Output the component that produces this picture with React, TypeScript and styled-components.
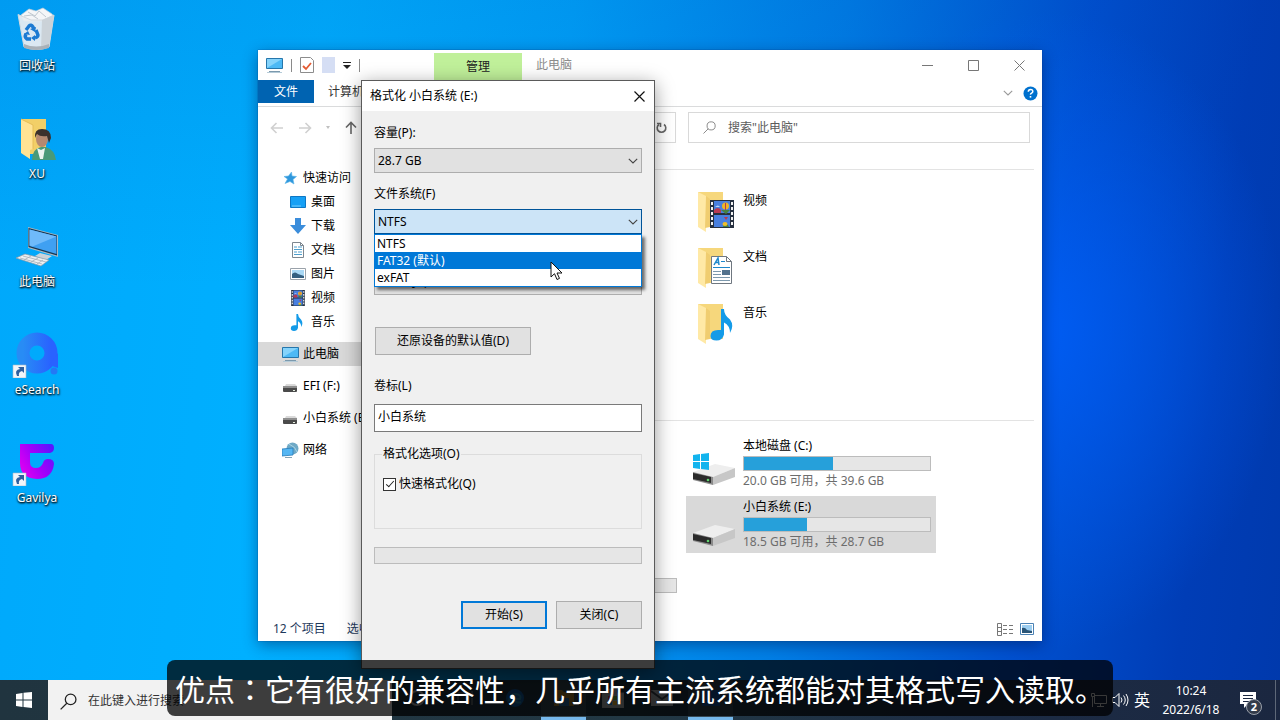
import React from 'react';
import styled, { createGlobalStyle, css } from 'styled-components';

const GlobalStyle = createGlobalStyle`
  *, *::before, *::after { box-sizing: border-box; }
  body { margin: 0; }
  body, button, input, select {
    font-family: "Noto Sans", "Noto Sans CJK SC", sans-serif;
    font-size: 12px;
    line-height: 18px;
  }
  button, input, select { border-radius: 0; color: #000; }
  ul { margin: 0; padding: 0; list-style: none; }
  svg { display: block; flex: none; }
`;

/* ---------- desktop ---------- */

const Desktop = styled.div`
  position: relative;
  display: flex;
  flex-direction: column;
  min-height: 100vh;
  overflow: hidden;
  background:
    radial-gradient(ellipse 240px 320px at 1045px 330px, rgba(0, 94, 248, 0.85), rgba(0, 90, 240, 0) 100%),
    linear-gradient(to bottom, rgba(0, 60, 170, 0.12), rgba(0, 60, 170, 0) 40%),
    linear-gradient(97deg, #00a8fb 0%, #00b0ff 24%, #00a2f8 42%, #007fe6 62%, #0050cf 80%, #003db6 92%, #0039ac 100%);
`;

const Shortcuts = styled.ul`
  display: flex;
  flex-direction: column;
  flex: 1;
  width: 74px;
  padding-top: 6px;
`;

const Shortcut = styled.li`
  display: flex;
  flex-direction: column;
  align-items: center;
  gap: 3px;
  height: 108px;
  color: #fff;
  text-shadow: 0 1px 2px #000, 1px 1px 2px rgba(0, 0, 0, 0.8);
`;

/* ---------- explorer window ---------- */

const Explorer = styled.section`
  position: absolute;
  top: 50px;
  left: 258px;
  right: 238px;
  display: flex;
  flex-direction: column;
  background: #fff;
  box-shadow: 0 0 1px #003a80, 0 4px 14px rgba(0, 20, 70, 0.45);
`;

const TitleRow = styled.header`
  display: flex;
  align-items: center;
  height: 30px;
`;

const QuickTools = styled.div`
  display: flex;
  align-items: center;
  gap: 8px;
  width: 176px;
  padding-left: 8px;
`;

const Divider = styled.span`
  width: 1px;
  height: 13px;
  background: #8a8a8a;
`;

const ManageTab = styled.div`
  align-self: flex-end;
  width: 88px;
  height: 27px;
  line-height: 27px;
  text-align: center;
  background: #c0f09a;
  color: #222;
`;

const WindowTitle = styled.span`
  flex: 1;
  padding-left: 14px;
  color: #8c8c8c;
`;

const CaptionButton = styled.button`
  display: grid;
  place-items: center;
  width: 46px;
  height: 28px;
  padding: 0;
  border: 0;
  background: transparent;
`;

const RibbonRow = styled.nav`
  display: flex;
  align-items: flex-start;
  height: 27px;
  border-bottom: 1px solid #dadbdc;
`;

const RibbonTab = styled.button<{ $primary?: boolean }>`
  height: 23px;
  padding: 0 14px;
  border: 0;
  background: ${p => (p.$primary ? '#0063b1' : 'transparent')};
  color: ${p => (p.$primary ? '#fff' : '#333')};
  width: ${p => (p.$primary ? '56px' : 'auto')};
`;

const RibbonEnd = styled.div`
  display: flex;
  align-items: center;
  gap: 10px;
  height: 26px;
  margin-left: auto;
  padding-right: 4px;
`;

const AddressRow = styled.div`
  display: flex;
  align-items: center;
  gap: 12px;
  height: 41px;
  padding-right: 12px;
`;

const Arrows = styled.div`
  display: flex;
  align-items: center;
  gap: 14px;
  width: 104px;
  padding-left: 12px;
`;

const AddressBox = styled.div`
  display: flex;
  align-items: center;
  justify-content: flex-end;
  flex: 0 0 302px;
  height: 31px;
  padding-right: 8px;
  border: 1px solid #d9d9d9;
`;

const SearchBox = styled.label`
  display: flex;
  align-items: center;
  flex: 1;
  gap: 12px;
  height: 31px;
  padding: 0 14px;
  border: 1px solid #d9d9d9;
`;

const BareInput = styled.input`
  flex: 1;
  min-width: 0;
  padding: 0;
  border: 0;
  outline: 0;
  background: transparent;
  &::placeholder { color: #5c5c5c; opacity: 1; }
`;

const ExplorerBody = styled.div`
  display: flex;
`;

const NavPane = styled.ul`
  width: 154px;
  padding-top: 18px;
  white-space: nowrap;
`;

const NavItem = styled.li<{ $level: number; $selected?: boolean; $spaced?: boolean }>`
  display: flex;
  align-items: center;
  gap: 5px;
  height: 24px;
  margin-top: ${p => (p.$spaced ? '8px' : '0')};
  padding-left: ${p => p.$level * 8 + 24}px;
  background: ${p => (p.$selected ? '#d9d9d9' : 'transparent')};
`;

const NavIcon = styled.span`
  display: flex;
  justify-content: center;
  width: 16px;
`;

const Content = styled.main`
  flex: 1;
  padding: 21px 8px 0 20px;
`;

const Group = styled.ul`
  display: grid;
  grid-template-columns: 250px 250px;
  align-content: start;
  column-gap: 4px;
  border-top: 1px solid #e3e3e3;
`;

const Folders = styled(Group)`
  grid-auto-rows: 56px;
  min-height: 251px;
  padding-top: 14px;
`;

const Drives = styled(Group)`
  grid-auto-rows: 57px;
  row-gap: 4px;
  min-height: 197px;
  padding-top: 14px;
`;

const Tile = styled.li<{ $column?: number; $selected?: boolean }>`
  grid-column: ${p => p.$column ?? 2};
  display: flex;
  gap: 5px;
  padding: 2px 5px 0 4px;
  background: ${p => (p.$selected ? '#d9d9d9' : 'transparent')};
`;

const FolderName = styled.span`
  padding-top: 6px;
`;

const DriveInfo = styled.div`
  flex: 1;
  display: flex;
  flex-direction: column;
`;

const Usage = styled.div`
  height: 15px;
  margin-top: 1px;
  border: 1px solid #bcbcbc;
  background: #e6e6e6;
`;

const UsageFill = styled.div`
  height: 100%;
  background: #26a0da;
`;

const FreeSpace = styled.span`
  line-height: 20px;
  color: #6d6d6d;
`;

const StatusBar = styled.footer`
  display: flex;
  align-items: center;
  gap: 21px;
  height: 24px;
  padding: 0 8px 0 15px;
  color: #1e395b;
`;

const ViewButtons = styled.div`
  display: flex;
  align-items: center;
  gap: 6px;
  margin-left: auto;
`;

/* ---------- format dialog ---------- */

const Dialog = styled.section`
  position: absolute;
  top: 80px;
  left: 361px;
  width: 294px;
  border: 1px solid #5a5a5a;
  background: #f0f0f0;
  box-shadow: 0 4px 18px rgba(0, 0, 0, 0.4);
`;

const DialogTitle = styled.header`
  display: flex;
  align-items: center;
  justify-content: space-between;
  height: 30px;
  padding-left: 8px;
  background: #fff;
`;

const CloseButton = styled.button`
  display: grid;
  place-items: center;
  width: 30px;
  height: 30px;
  padding: 0;
  border: 0;
  background: transparent;
`;

const Form = styled.form`
  display: flex;
  flex-direction: column;
  gap: 12px;
  padding: 13px 12px 39px;
`;

const Field = styled.div`
  position: relative;
  display: flex;
  flex-direction: column;
  gap: 6px;
`;

const UnitField = styled(Field)`
  padding-top: 24px;
`;

const SelectWrap = styled.div`
  display: grid;
  align-items: center;
  > * { grid-area: 1 / 1; }
  > svg { justify-self: end; margin-right: 4px; pointer-events: none; }
`;

const Select = styled.select<{ $open?: boolean }>`
  appearance: none;
  width: 100%;
  height: 25px;
  padding: 0 4px 0 3px;
  outline: 0;
  ${p => p.$open
    ? css`border: 1px solid #005499; background: #cce4f7;`
    : css`border: 1px solid #adadad; background: #e1e1e1;`}
`;

const OptionList = styled.ul`
  position: absolute;
  z-index: 2;
  top: 49px;
  left: 0;
  right: 0;
  border: 1px solid #0078d7;
  background: #fff;
  box-shadow: 3px 3px 3px rgba(0, 0, 0, 0.55);
`;

const Option = styled.li<{ $active?: boolean }>`
  height: 17px;
  padding-left: 2px;
  line-height: 17px;
  background: ${p => (p.$active ? '#0078d7' : 'transparent')};
  color: ${p => (p.$active ? '#fff' : '#000')};
`;

const PushButton = styled.button<{ $default?: boolean }>`
  width: 86px;
  height: 28px;
  padding: 0;
  background: #e1e1e1;
  border: ${p => (p.$default ? '2px solid #0078d7' : '1px solid #adadad')};
`;

const RestoreButton = styled(PushButton)`
  width: 156px;
  margin: 20px 0 10px 1px;
`;

const LabelInput = styled.input`
  height: 28px;
  margin-top: 3px;
  padding: 0 3px 4px;
  outline: 0;
  border: 1px solid #7a7a7a;
  background: #fff;
`;

const Options = styled.fieldset`
  min-width: 0;
  height: 84px;
  margin: 1px 0 0;
  padding: 12px 8px 0;
  border: 1px solid #dcdcdc;
`;

const Legend = styled.legend`
  margin-left: -1px;
  padding: 0 1px;
`;

const CheckLabel = styled.label`
  display: flex;
  align-items: center;
  gap: 3px;
`;

const CheckBox = styled.input`
  appearance: none;
  width: 13px;
  height: 13px;
  margin: 0;
  border: 1px solid #333;
  background: #fff;
  &:checked::after {
    content: "";
    display: block;
    width: 4px;
    height: 8px;
    margin: 0 0 0 4px;
    border: solid #222;
    border-width: 0 1px 1px 0;
    transform: rotate(42deg);
  }
`;

const ProgressTrack = styled.div`
  height: 17px;
  margin-top: 6px;
  border: 1px solid #bcbcbc;
  background: #e6e6e6;
`;

const Actions = styled.div`
  display: flex;
  justify-content: flex-end;
  gap: 9px;
  margin-top: 25px;
`;

const Pointer = styled.svg`
  position: absolute;
  z-index: 3;
  top: 261px;
  left: 550px;
`;

/* ---------- taskbar ---------- */

const Taskbar = styled.footer`
  display: flex;
  height: 40px;
  background: linear-gradient(90deg, #20343f 0%, #223844 50%, #1c2c45 78%, #1b2740 100%);
  color: #fff;
`;

const StartButton = styled.button`
  display: grid;
  place-items: center;
  width: 48px;
  padding: 0;
  border: 0;
  background: transparent;
`;

const TaskSearch = styled.label`
  display: flex;
  align-items: center;
  gap: 11px;
  width: 344px;
  padding: 2px 0 0 12px;
  background: #f2f2f2;
  input::placeholder { color: #333; }
`;

const TaskApp = styled.button<{ $running?: boolean }>`
  display: grid;
  place-items: center;
  width: 45px;
  margin: 0 2px;
  padding: 0 0 2px;
  border: 0;
  border-bottom: 3px solid ${p => (p.$running ? '#76b9ed' : 'transparent')};
  background: ${p => (p.$running ? 'rgba(255,255,255,0.1)' : 'transparent')};
  background-clip: padding-box;
`;

const Tray = styled.div`
  display: flex;
  align-items: center;
  gap: 5px;
  margin-left: auto;
  padding-right: 4px;
`;

const Ime = styled.span`
  font-size: 16px;
  line-height: 24px;
`;

const Clock = styled.time`
  display: flex;
  flex-direction: column;
  width: 68px;
  padding-left: 4px;
  text-align: center;
  line-height: 19px;
  white-space: nowrap;
`;

const Notices = styled.div`
  position: relative;
  width: 42px;
  padding-left: 12px;
`;

const NoticeCount = styled.span`
  position: absolute;
  top: 7px;
  left: 18px;
  width: 16px;
  height: 16px;
  border: 1px solid #9aa0aa;
  border-radius: 8px;
  background: #333b4a;
  font-size: 11px;
  font-weight: 700;
  line-height: 14px;
  text-align: center;
`;

const PeekEdge = styled.span`
  align-self: stretch;
  width: 1px;
  background: #5e6878;
`;

/* ---------- caption ---------- */

const Caption = styled.p`
  position: absolute;
  z-index: 4;
  bottom: 4px;
  left: 50%;
  transform: translateX(-50%);
  margin: 0;
  padding: 0 8px;
  border-radius: 8px;
  background: rgba(0, 0, 0, 0.75);
  color: #fff;
  font-family: "Noto Sans CJK SC", sans-serif;
  font-size: 30px;
  font-weight: 400;
  line-height: 56px;
  white-space: nowrap;
`;

const MidMark = styled.span`
  font-family: "Noto Sans CJK TC", sans-serif;
`;

/* ---------- drawings ---------- */

const BinIcon = () => (
  <svg width="44" height="48" viewBox="0 0 44 48">
    <path d="M6 9 14 3l7 2 7-3 9 6 2 3-5 4H9z" fill="#f4f6f8" stroke="#c4ccd4" strokeWidth=".7" />
    <path d="m13 6 7 4 4-5 7 6M9 10l8-1 6 4" fill="none" stroke="#bfc8d0" />
    <path d="M3 8.500 9 41q13 5 25 0l5-32-11 5H16z" fill="#e9edf1" fillOpacity=".94" stroke="#d2d9df" />
    <path d="m27 14 12-5-5 32-8 2z" fill="#cbd2d8" />
    <path d="M9 38q12 5 25 0v4q-13 4-25 0z" fill="#aab1b8" />
    <g fill="none" stroke="#1c7ad2" strokeWidth="3.400">
      <path d="m11 24 3-4q2-2 4 1l1 2M21 24l2 5q0 2-3 3M16 33h-4q-3-2-1-5" />
    </g>
    <path d="m15 23 6-2-1 5zM20 29v6l-4-3zM9 28l4-3 2 4z" fill="#1c7ad2" />
  </svg>
);

const UserFolder = () => (
  <svg width="40" height="48" viewBox="0 0 40 48">
    <path d="M4 5h25v35H8z" fill="#f2cf67" />
    <path d="m4 5 12 6v24l-3 1v9l-9-6z" fill="#ffe394" />
    <path d="m4 5 12 6v24" fill="none" stroke="#e6bd56" />
    <path d="M15 46q0-11 9-13h5q9 3 10 13z" fill="#4a9a78" />
    <path d="m20 34 4 2 4-2-2 11h-3z" fill="#edf5f1" />
    <ellipse cx="25" cy="25" rx="6" ry="8" fill="#b58870" />
    <path d="M18 24q-1-9 7-9 9 0 9 9l-2 5-2-7q-7 1-10-2z" fill="#3b302c" />
  </svg>
);

const DesktopPc = () => (
  <svg width="44" height="48" viewBox="0 0 44 48">
    <path d="m13 5 30 8v22l-30-9z" fill="#a9b8c4" />
    <path d="m13.500 6 28.500 7.500v20L13.500 25z" fill="#18364f" />
    <path d="m14.500 7.500 27 7v17.500l-27-8z" fill="#3fa0f2" />
    <path d="m14.500 7.500 27 7-24 10-3-1z" fill="#6fbafa" />
    <path d="m20 34 5-3 12 3-6 4z" fill="#cbd3d9" />
    <path d="m1 36 9-4 24 6-8 6z" fill="#edf0f2" stroke="#8b98a4" strokeWidth=".7" />
    <path d="m5 36 22 6M8 34l23 6M9 38l7-4M16 40l7-4M22 42l6-4" stroke="#a6afb8" strokeWidth=".8" />
  </svg>
);

const ShortcutArrow = () => (
  <g>
    <path d="M0 32h13v13H0z" fill="#f2f6fa" stroke="#a9bacb" strokeWidth=".6" />
    <path d="M4 43q-3-6 3-7l-2-2h6v6l-2-2q-4 1-3 5z" fill="#2f5f9f" />
  </g>
);

const ESearchIcon = () => (
  <svg width="50" height="48" viewBox="0 0 50 48">
    <defs>
      <linearGradient id="es" x1="0" x2="1"><stop stopColor="#288cf5" /><stop offset="1" stopColor="#2962ff" /></linearGradient>
    </defs>
    <circle cx="25" cy="23" r="14" fill="none" stroke="url(#es)" strokeWidth="13" />
    <circle cx="42" cy="41" r="3.500" fill="#2478f5" />
    <path d="M46 23v15l-9-3z" fill="#2962ff" />
    <g transform="translate(1 3)"><ShortcutArrow /></g>
  </svg>
);

const GavilyaIcon = () => (
  <svg width="50" height="48" viewBox="0 0 50 48">
    <defs>
      <linearGradient id="gv" y1=".8" x2="1" y2=".2"><stop stopColor="#e500f0" /><stop offset=".5" stopColor="#a500fa" /><stop offset="1" stopColor="#5a16ff" /></linearGradient>
    </defs>
    <path d="M8 6h31q3 0 3 4t-4 5H18v9q0 6 6 6 5 0 7-5 1-4 5-4 6 0 6 5-2 15-17 15Q8 40 8 25z" fill="url(#gv)" />
    <g transform="translate(1 3)"><ShortcutArrow /></g>
  </svg>
);

const PcIcon = () => (
  <svg width="17" height="16" viewBox="0 0 17 16">
    <path d="M.5 1.500h16v10H.5z" fill="#4db9f5" stroke="#2676ab" />
    <path d="M1 2h15L1 11z" fill="#85d3fb" />
    <path d="M3 14.500h11" stroke="#7b99ad" />
    <path d="M1 15.500h15" stroke="#b5cbd8" />
  </svg>
);

const StarIcon = () => (
  <svg width="14" height="14" viewBox="0 0 14 14">
    <path d="m8.500 1 .500 4 4.500.5-3.500 3 1 4.500-4-2.500-5 2 2.500-4.500L1 5.500l4.500-.5z" fill="#2f97dc" stroke="#5cb5ea" strokeWidth=".6" />
  </svg>
);

const DesktopIcon = () => (
  <svg width="16" height="16" viewBox="0 0 16 16"><path d="M.5 2.500h15v11H.5z" fill="#16a0f5" stroke="#0d77c4" /><path d="M2 12h9" stroke="#79cdfa" /></svg>
);

const DownloadIcon = () => (
  <svg width="16" height="16" viewBox="0 0 16 16"><path d="M5 0h6v7h5l-8 9-8-9h5z" fill="#3b8ddb" /></svg>
);

const DocumentIcon = () => (
  <svg width="16" height="16" viewBox="0 0 16 16">
    <path d="M2.500.5h8l3 3v12h-11z" fill="#fff" stroke="#7d8790" />
    <path d="M10.500.5v3h3" fill="none" stroke="#7d8790" />
    <path d="M4 5h3M8 5h4M4 7.500h8M4 10h3M8 10h4M4 12.500h8" stroke="#4d9fce" />
  </svg>
);

const PictureIcon = () => (
  <svg width="16" height="16" viewBox="0 0 16 16">
    <path d="M.5 2.500h15v11H.5z" fill="#fff" stroke="#9aa2aa" />
    <path d="M2 4h12v8H2z" fill="#a9d8f5" /><path d="M2 8q3-3 6 0l6 2v2H2z" fill="#345f80" />
  </svg>
);

const FilmArt = () => (
  <g>
    <path d="M0 0h24v28H0z" fill="#263040" />
    <path d="M4 1h16v12H4zM4 15h16v12H4z" fill="#487fe0" />
    <path d="M1 2h2v3H1zm0 5h2v3H1zm0 5h2v3H1zm0 5h2v3H1zm0 5h2v3H1zM21 2h2v3h-2zm0 5h2v3h-2zm0 5h2v3h-2zm0 5h2v3h-2zm0 5h2v3h-2z" fill="#f2f2f2" />
    <path d="M4 10q4-4 7 0v3H4zM14 17h4l-2 3z" fill="#b83a52" />
    <path d="M5 7q3-3 5 0z" fill="#b9d4f5" />
    <ellipse cx="15.500" cy="6" rx="3.500" ry="3.500" fill="#efb625" />
    <path d="M15 3h1v7h-1z" fill="#b83a52" />
    <path d="M11 10h9l-4 4zM13 27q2-8 6 0z" fill="#478241" />
    <ellipse cx="15" cy="24" rx="2.500" ry="2" fill="#f0be2b" />
  </g>
);

const VideoIcon = () => (
  <svg width="16" height="16" viewBox="-2 0 28 28"><FilmArt /></svg>
);

const NoteShape = () => <path d="M8 0h2q0 4 4 7 3 4 0 9 0-5-4-7v8q-1 4-5 4-4 0-4-3 0-4 5-4h2z" fill="#149be8" />;

const MusicIcon = () => (
  <svg width="16" height="17" viewBox="0 0 20 21"><NoteShape /></svg>
);

const SmallDrive = () => (
  <svg width="16" height="16" viewBox="0 0 16 16">
    <path d="m3 8 1-2h9l2 2z" fill="#d9d9d9" /><rect x="1" y="8" width="14" height="6" rx="1" fill="#4a4a4a" /><path d="M1 8h14v2H1z" fill="#8f8f8f" /><path d="M11 12.500h2" stroke="#e5eee0" />
  </svg>
);

const NetworkIcon = () => (
  <svg width="17" height="16" viewBox="0 0 17 16">
    <circle cx="10.500" cy="6.500" r="6" fill="#6fa9c6" /><path d="M7 2q7 3 8 8" stroke="#a9d4e6" fill="none" />
    <path d="m0 7 11-1v7L0 14z" fill="#55b6f3" stroke="#267bb9" strokeWidth=".8" /><path d="M3 15.500h7" stroke="#86a4b5" />
  </svg>
);

const Folder = ({ children }: { children?: React.ReactNode }) => (
  <svg width="48" height="48" viewBox="0 0 48 48">
    <path d="M8 6h25v35H11z" fill="#f6d77c" />
    <path d="m8 6 8 4v36l-8-5z" fill="#ffe9a6" />
    <path d="m16 10-1 32 5-1V13z" fill="#f0cd70" />
    {children}
  </svg>
);

const DriveIcon = ({ windows }: { windows?: boolean }) => (
  <svg width="48" height="50" viewBox="0 0 48 50">
    <path d="m3 35 22-8 20 4-22 9z" fill="#eeeeee" />
    <path d="m3 35 20 5v8L3 43z" fill="#8b8b8b" />
    <path d="m23 40 22-9v9l-22 8z" fill="#c7c7c7" />
    <path d="m3 36 18 4v6L3 42z" fill="#2b2b2b" />
    <circle cx="18" cy="43" r="1.300" fill="#5fd36d" />
    {windows && <path d="m3 18 7-1v7H3zm8-1 8-1v8h-8zm-8 8h7v7l-7-1zm8 0h8v8l-8-1z" fill="#12b4ee" />}
  </svg>
);

const Chevron = ({ color = '#444' }: { color?: string }) => (
  <svg width="10" height="6" viewBox="0 0 10 6"><path d="m.8.8 4.200 4.200L9.200.8" fill="none" stroke={color} strokeWidth="1.100" /></svg>
);

const Lens = ({ size, color }: { size: number; color: string }) => (
  <svg width={size} height={size} viewBox="0 0 16 16" fill="none" stroke={color} strokeWidth="1.200"><circle cx="10" cy="6" r="5" /><path d="M6.400 9.600.6 15.400" /></svg>
);

const Arrow = ({ turn, color }: { turn: number; color: string }) => (
  <svg width="14" height="14" viewBox="0 0 14 14"><path transform={`rotate(${turn} 7 7)`} d="M13 7H1.500m5-5-5 5 5 5" fill="none" stroke={color} strokeWidth="1.600" /></svg>
);

/* ---------- data ---------- */

const folders = [
  { name: '视频', art: <g transform="translate(20 14)"><FilmArt /></g> },
  {
    name: '文档',
    art: (
      <g>
        <path d="M21.500 14.500h15l5 5v22h-20z" fill="#fff" stroke="#6f7780" /><path d="M36.500 14.500v5h5" fill="none" stroke="#6f7780" />
        <path d="m24 23 4-7 1 7m-3.500-2.500H29" fill="none" stroke="#1e88cc" strokeWidth="1.500" />
        <path d="M31 19.500h4M23 25.500h17" stroke="#1e88cc" /><path d="M23 29.500h8M23 32.500h8M23 35.500h17M23 38.500h17" stroke="#7d99ad" /><path d="M32 28h8v5h-8z" fill="#53728d" />
      </g>
    ),
  },
  { name: '音乐', art: <g transform="translate(19 11) scale(1.5)"><NoteShape /></g> },
];

const shortcuts = [
  { name: '回收站', icon: <BinIcon /> },
  { name: 'XU', icon: <UserFolder /> },
  { name: '此电脑', icon: <DesktopPc /> },
  { name: 'eSearch', icon: <ESearchIcon /> },
  { name: 'Gavilya', icon: <GavilyaIcon /> },
];

const places = [
  { name: '快速访问', icon: <StarIcon />, level: 0 },
  { name: '桌面', icon: <DesktopIcon />, level: 1 },
  { name: '下载', icon: <DownloadIcon />, level: 1 },
  { name: '文档', icon: <DocumentIcon />, level: 1 },
  { name: '图片', icon: <PictureIcon />, level: 1 },
  { name: '视频', icon: <VideoIcon />, level: 1 },
  { name: '音乐', icon: <MusicIcon />, level: 1 },
  { name: '此电脑', icon: <PcIcon />, level: 0, spaced: true, selected: true },
  { name: 'EFI (F:)', icon: <SmallDrive />, level: 0, spaced: true },
  { name: '小白系统 (E:)', icon: <SmallDrive />, level: 0, spaced: true },
  { name: '网络', icon: <NetworkIcon />, level: 0, spaced: true },
];

const drives = [
  { name: '本地磁盘 (C:)', free: '20.0 GB 可用，共 39.6 GB', used: 48, windows: true },
  { name: '小白系统 (E:)', free: '18.5 GB 可用，共 28.7 GB', used: 34, selected: true },
];

function ExplorerWindow() {
  return (
    <Explorer aria-label="此电脑">
      <TitleRow>
        <QuickTools>
          <PcIcon />
          <Divider />
          <svg width="14" height="16" viewBox="0 0 14 16"><path d="M.5.5h10l3 3v12H.5z" fill="#fff" stroke="#8c8c8c" /><path d="m3 9 3 3 5-6" fill="none" stroke="#e45b32" strokeWidth="1.800" /></svg>
          <svg width="13" height="16" viewBox="0 0 13 16"><path d="M0 0h13v16H0z" fill="#d5def4" /></svg>
          <svg width="8" height="9" viewBox="0 0 8 9"><path d="M0 1.500h8" stroke="#222" /><path d="M0 4h8L4 8z" fill="#222" /></svg>
          <Divider />
        </QuickTools>
        <ManageTab>管理</ManageTab>
        <WindowTitle>此电脑</WindowTitle>
        <CaptionButton aria-label="最小化"><svg width="11" height="11"><path d="M0 5.500h11" stroke="#777" /></svg></CaptionButton>
        <CaptionButton aria-label="最大化"><svg width="11" height="11"><path d="M.5.5h10v10H.5z" fill="none" stroke="#777" /></svg></CaptionButton>
        <CaptionButton aria-label="关闭"><svg width="11" height="11"><path d="m.5.5 10 10m0-10-10 10" stroke="#777" /></svg></CaptionButton>
      </TitleRow>
      <RibbonRow>
        <RibbonTab $primary>文件</RibbonTab>
        <RibbonTab>计算机</RibbonTab>
        <RibbonEnd>
          <Chevron color="#999" />
          <svg width="15" height="15" viewBox="0 0 15 15"><circle cx="7.500" cy="7.500" r="7" fill="#0071ce" /><path d="M5.300 5.800q0-2.300 2.300-2.300t2.200 2q0 1-1.200 1.700t-1.100 1.500" fill="none" stroke="#fff" strokeWidth="1.500" /><path d="M6.700 10h1.600v1.600H6.700z" fill="#fff" /></svg>
        </RibbonEnd>
      </RibbonRow>
      <AddressRow>
        <Arrows>
          <Arrow turn={0} color="#d0d0d0" />
          <Arrow turn={180} color="#d0d0d0" />
          <svg width="4" height="3"><path d="M0 0h4L2 3z" fill="#c0c0c0" /></svg>
          <Arrow turn={90} color="#666" />
        </Arrows>
        <AddressBox>
          <svg width="11" height="12" viewBox="0 0 11 12" fill="none" stroke="#666" strokeWidth="1.600"><path d="M8 2.500a4.300 4.300 0 1 1-5 0" /><path d="M1 1.500h3.500V5" /></svg>
        </AddressBox>
        <SearchBox>
          <Lens size={13} color="#888" />
          <BareInput aria-label="搜索" placeholder={'搜索"此电脑"'} />
        </SearchBox>
      </AddressRow>
      <ExplorerBody>
        <NavPane>
          {places.map(p => (
            <NavItem key={p.name + p.level} $level={p.level} $selected={p.selected} $spaced={p.spaced}>
              <NavIcon>{p.icon}</NavIcon>
              {p.name}
            </NavItem>
          ))}
        </NavPane>
        <Content>
          <Folders>
            {folders.map(f => (
              <Tile key={f.name}>
                <Folder>{f.art}</Folder>
                <FolderName>{f.name}</FolderName>
              </Tile>
            ))}
          </Folders>
          <Drives>
            {drives.map(d => (
              <Tile key={d.name} $selected={d.selected}>
                <DriveIcon windows={d.windows} />
                <DriveInfo>
                  {d.name}
                  <Usage><UsageFill style={{ width: `${d.used}%` }} /></Usage>
                  <FreeSpace>{d.free}</FreeSpace>
                </DriveInfo>
              </Tile>
            ))}
            <Tile $column={1}>
              <DriveIcon />
              <DriveInfo>
                <span>&nbsp;</span>
                <Usage />
              </DriveInfo>
            </Tile>
          </Drives>
        </Content>
      </ExplorerBody>
      <StatusBar>
        <span>12 个项目</span>
        <span>选中 1 个项目</span>
        <ViewButtons>
          <svg width="17" height="13" viewBox="0 0 17 13"><path d="M.5.500h4v12h-4zM.5 4.500h4M.5 8.500h4" fill="none" stroke="#777" /><path d="M6 2.500h4m2 0h4M6 6.500h4m2 0h4M6 10.500h4m2 0h4" stroke="#777" /></svg>
          <svg width="14" height="12" viewBox="0 0 14 12"><path d="M.5.5h13v11H.5z" fill="#fff" stroke="#4b82b4" /><path d="M2 2h10v8H2z" fill="#9dcef0" /><path d="M2 5q3-1 5 2l5 1v2H2z" fill="#2a5577" /></svg>
        </ViewButtons>
      </StatusBar>
    </Explorer>
  );
}

function FormatDialog() {
  return (
    <Dialog role="dialog" aria-labelledby="format-title">
      <DialogTitle>
        <span id="format-title">格式化 小白系统 (E:)</span>
        <CloseButton aria-label="关闭"><svg width="11" height="11"><path d="m.5.5 10 10m0-10-10 10" stroke="#111" strokeWidth="1.200" /></svg></CloseButton>
      </DialogTitle>
      <Form onSubmit={e => e.preventDefault()}>
        <Field>
          <label htmlFor="capacity">容量(P):</label>
          <SelectWrap>
            <Select id="capacity"><option>28.7 GB</option></Select>
            <Chevron />
          </SelectWrap>
        </Field>
        <Field>
          <label htmlFor="fs">文件系统(F)</label>
          <SelectWrap>
            <Select id="fs" $open><option>NTFS</option></Select>
            <Chevron />
          </SelectWrap>
          <OptionList role="listbox">
            <Option role="option">NTFS</Option>
            <Option role="option" $active aria-selected>FAT32 (默认)</Option>
            <Option role="option">exFAT</Option>
          </OptionList>
        </Field>
        <UnitField>
          <SelectWrap>
            <Select aria-label="分配单元大小"><option>4096 字节</option></Select>
            <Chevron />
          </SelectWrap>
        </UnitField>
        <RestoreButton type="button">还原设备的默认值(D)</RestoreButton>
        <Field>
          <label htmlFor="volume">卷标(L)</label>
          <LabelInput id="volume" defaultValue="小白系统" />
        </Field>
        <Options>
          <Legend>格式化选项(O)</Legend>
          <CheckLabel><CheckBox type="checkbox" defaultChecked />快速格式化(Q)</CheckLabel>
        </Options>
        <ProgressTrack role="progressbar" aria-label="进度" />
        <Actions>
          <PushButton type="button" $default>开始(S)</PushButton>
          <PushButton type="button">关闭(C)</PushButton>
        </Actions>
      </Form>
    </Dialog>
  );
}

export default function App() {
  return (
    <Desktop>
      <GlobalStyle />
      <Shortcuts>
        {shortcuts.map(s => <Shortcut key={s.name}>{s.icon}<span>{s.name}</span></Shortcut>)}
      </Shortcuts>
      <ExplorerWindow />
      <FormatDialog />
      <Pointer width="13" height="20" viewBox="0 0 13 20"><path d="M1 1v15l3.500-3.300L7 18.500l2.500-1.100L7 12h5z" fill="#fff" stroke="#111" /></Pointer>
      <Taskbar>
        <StartButton aria-label="开始"><svg width="16" height="16"><path d="m0 2 6.500-1v6.500H0zm7.500-1.200L16 0v7.500H7.500zM0 8.500h6.500V15L0 14zm7.500 0H16V16l-8.500-1z" fill="#fff" /></svg></StartButton>
        <TaskSearch>
          <Lens size={17} color="#222" />
          <BareInput aria-label="搜索" placeholder="在此键入进行搜索" />
        </TaskSearch>
        <TaskApp aria-label="Cortana"><svg width="18" height="18"><circle cx="9" cy="9" r="7" fill="none" stroke="#bbb" strokeWidth="2" /></svg></TaskApp>
        <TaskApp aria-label="任务视图"><svg width="18" height="18" fill="none" stroke="#999"><path d="M1 4h11v10H1zM15 2v4m0 3v7" /></svg></TaskApp>
        <TaskApp aria-label="Edge"><svg width="20" height="20"><circle cx="10" cy="10" r="9" fill="#125fa8" /><path d="M4 13q1-8 7-7 6 1 4 5H9q2 5 7 3" fill="none" stroke="#2a8bb0" strokeWidth="2" /></svg></TaskApp>
        <TaskApp $running aria-label="文件资源管理器"><svg width="20" height="18"><path d="M0 1h8l2 2h10v14H0z" fill="#a8812e" /><path d="M5 9h10v8H5z" fill="#2b6ea5" /></svg></TaskApp>
        <TaskApp aria-label="应用商店"><svg width="22" height="20"><path d="M0 5h22v15H0zM7 5V1h8v4" fill="#b4babd" stroke="#aaa" /><path d="M6 8h4v4H6z" fill="#e94e34" /><path d="M11 8h4v4h-4z" fill="#6bb23b" /><path d="M6 13h4v4H6z" fill="#218fda" /><path d="M11 13h4v4h-4z" fill="#efb72d" /></svg></TaskApp>
        <TaskApp aria-label="邮件"><svg width="22" height="16"><path d="M0 0h22v16H0z" fill="#b4b8bc" /><path d="m0 1 11 8 11-8" fill="none" stroke="#3d4650" strokeWidth="2" /></svg></TaskApp>
        <TaskApp $running aria-label="小白系统"><svg width="20" height="20"><path d="M1 2h18v16H1z" fill="#1450a0" /></svg></TaskApp>
        <Tray>
          <svg width="17" height="15" viewBox="0 0 17 15" fill="none" stroke="#ddd"><path d="M4.500 2.500h12v8h-12zM1.500.5h3v3h-3zM2.500 4v10M7 13.500h7M10.500 11v2" /></svg>
          <svg width="17" height="16" viewBox="0 0 17 16" fill="none" stroke="#fff"><path d="M.5 5.500H3l4-4v13l-4-4H.5zM9 5.500q2 2.500 0 5M11.500 3.500q3.500 4.500 0 9M14 2q4 6 0 12" /></svg>
          <Ime>英</Ime>
          <Clock><span>10:24</span><span>2022/6/18</span></Clock>
          <Notices>
            <svg width="16" height="17" viewBox="0 0 16 17"><path d="M0 0h16v12H8l-4 4v-4H0z" fill="#fff" /><path d="M3 3.500h10M3 6.500h10M3 9.500h6" stroke="#1b2740" /></svg>
            <NoticeCount>2</NoticeCount>
          </Notices>
          <PeekEdge />
        </Tray>
      </Taskbar>
      <Caption>优点<MidMark>：</MidMark>它有很好的兼容性，几乎所有主流系统都能对其格式写入读取。</Caption>
    </Desktop>
  );
}
